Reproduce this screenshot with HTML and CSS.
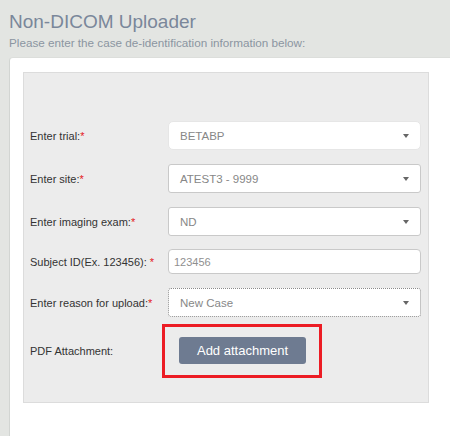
FILE: index.html
```html
<!DOCTYPE html>
<html>
<head>
<meta charset="utf-8">
<link rel="stylesheet" href="styles.css">
</head>
<body>
<div class="page">
  <h1 class="title">Non-DICOM Uploader</h1>
  <p class="subtitle">Please enter the case de-identification information below:</p>
  <div class="card">
    <div class="panel">
      <div class="row">
        <div class="label">Enter trial:<span class="req">*</span></div>
        <div class="select select-plain"><span class="val">BETABP</span><span class="caret"></span></div>
      </div>
      <div class="row">
        <div class="label">Enter site:<span class="req">*</span></div>
        <div class="select"><span class="val">ATEST3 - 9999</span><span class="caret"></span></div>
      </div>
      <div class="row row-tight">
        <div class="label">Enter imaging exam:<span class="req">*</span></div>
        <div class="select"><span class="val">ND</span><span class="caret"></span></div>
      </div>
      <div class="row row-input">
        <div class="label">Subject ID(Ex. 123456): <span class="req">*</span></div>
        <div class="input"><span class="val-input">123456</span></div>
      </div>
      <div class="row">
        <div class="label">Enter reason for upload:<span class="req">*</span></div>
        <div class="select select-focus"><span class="val">New Case</span><span class="caret"></span></div>
      </div>
      <div class="row row-attach">
        <div class="label">PDF Attachment:</div>
        <div class="highlight"><button class="btn">Add attachment</button></div>
      </div>
    </div>
  </div>
</div>
</body>
</html>
```
FILE: styles.css
```css
html, body {
  margin: 0;
  padding: 0;
  background: #e3e5e2;
  overflow: hidden;
  width: 450px;
  height: 436px;
  font-family: "Liberation Sans", Arial, sans-serif;
}
.page {
  height: 436px;
  box-sizing: border-box;
  padding: 11px 0 0 9px;
  display: flex;
  flex-direction: column;
}
.title {
  margin: 0;
  font-size: 19px;
  line-height: 22px;
  font-weight: normal;
  color: #7a879a;
}
.subtitle {
  margin: 3px 0 0 0;
  font-size: 11.7px;
  line-height: 14px;
  color: #8b95a1;
}
.card {
  flex: 1;
  margin-top: 7px;
  background: #ffffff;
  border-left: 1px solid #d2d5d2;
  border-top: 1px solid #dcdedb;
  border-top-left-radius: 4px;
  padding: 14px 0 0 13px;
  box-sizing: border-box;
}
.panel {
  width: 406px;
  box-sizing: border-box;
  background: #ececec;
  border: 1px solid #dcdcdc;
  padding: 48px 7px 24px 6px;
}
.row {
  display: flex;
  align-items: center;
  height: 29px;
  margin-bottom: 14px;
}
.row-tight {
  margin-bottom: 13px;
}
.row-input {
  height: 25px;
}
.row-attach {
  height: auto;
  margin-top: -7px;
  margin-bottom: 0;
}
.label {
  width: 138px;
  flex: none;
  font-size: 11px;
  color: #333333;
}
.req {
  color: #e4161b;
}
.select, .input {
  flex: 1;
  height: 29px;
  box-sizing: border-box;
  background: #ffffff;
  border: 1px solid #c9c9c9;
  border-radius: 3px;
  display: flex;
  align-items: center;
  padding: 0 11px 0 11px;
}
.select-plain {
  border-color: #e6e6e6;
  border-radius: 5px;
}
.select-focus {
  border: 1px dotted #8a8a8a;
}
.input {
  height: 25px;
  border-radius: 4px;
  padding-left: 5px;
}
.val {
  flex: 1;
  font-size: 11.5px;
  color: #878787;
}
.val-input {
  font-size: 11px;
  color: #8f8f8f;
}
.caret {
  width: 0;
  height: 0;
  border-left: 3.5px solid transparent;
  border-right: 3.5px solid transparent;
  border-top: 4px solid #666666;
}
.highlight {
  margin-left: -6px;
  border: 3px solid #ec1c24;
  padding: 10px 13px 11px 14px;
}
.btn {
  display: block;
  width: 127px;
  height: 27px;
  background: #6e7b91;
  border: none;
  border-radius: 3px;
  color: #ffffff;
  font-family: "Liberation Sans", Arial, sans-serif;
  font-size: 13px;
  padding: 0;
}
```
